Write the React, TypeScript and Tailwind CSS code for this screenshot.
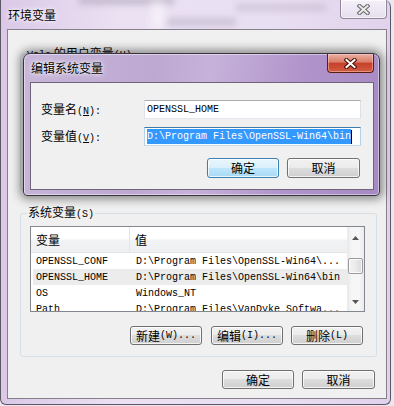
import React from 'react';

const cjk = "font-['Noto_Sans_CJK_SC',sans-serif] text-[12px]";
const mono = "font-['Liberation_Mono',monospace] text-[10px]";
const glow = '[text-shadow:0_0_6px_#fff,0_0_3px_#fff]';

interface EnvVar {
  name: string;
  value: string;
  selected?: boolean;
}

const systemVars: EnvVar[] = [
  { name: 'OPENSSL_CONF', value: 'D:\\Program Files\\OpenSSL-Win64\\...' },
  { name: 'OPENSSL_HOME', value: 'D:\\Program Files\\OpenSSL-Win64\\bin', selected: true },
  { name: 'OS', value: 'Windows_NT' },
  { name: 'Path', value: 'D:\\Program Files\\VanDyke Softwa...' },
];

const Latin: React.FC<{ children: React.ReactNode }> = ({ children }) => (
  <span className={mono}>{children}</span>
);

const CloseX: React.FC<{ outer: string; inner: string }> = ({ outer, inner }) => (
  <svg width="13" height="11" viewBox="0 0 13 11">
    <path d="M2.5 2 L10.5 9 M10.5 2 L2.5 9" stroke={outer} strokeWidth="4.2" strokeLinecap="square" />
    <path d="M2.5 2 L10.5 9 M10.5 2 L2.5 9" stroke={inner} strokeWidth="2" strokeLinecap="square" />
  </svg>
);

const Btn: React.FC<{ children: React.ReactNode; className: string; primary?: boolean }> = ({ children, className, primary }) => (
  <div
    className={`${className} flex items-center justify-center rounded-[3px] border leading-none text-black ${
      primary
        ? 'border-[#3c7fb1] bg-[linear-gradient(#eaf6fd_0%,#d9f0fc_49%,#bee6fd_50%,#a7d9f5_100%)]'
        : 'border-[#707070] bg-[linear-gradient(#f2f2f2_0%,#ebebeb_49%,#dddddd_50%,#cfcfcf_100%)]'
    } shadow-[inset_0_0_0_1px_rgba(255,255,255,0.75)]`}
  >
    {children}
  </div>
);

const Arrow: React.FC<{ down?: boolean }> = ({ down }) => (
  <svg width="7" height="4" viewBox="0 0 7 4">
    <path d={down ? 'M0 0 L7 0 L3.5 4 Z' : 'M0 4 L3.5 0 L7 4 Z'} fill="#565656" />
  </svg>
);

const VarList: React.FC = () => (
  <div className="mt-[4px] ml-[9px] w-[335px] h-[86px] border border-[#828790] bg-white flex overflow-hidden">
    <div className="flex-1 flex flex-col overflow-hidden">
      {/* header */}
      <div className="h-[26px] shrink-0 flex bg-[linear-gradient(#ffffff_0%,#ffffff_45%,#f1f2f4_55%,#eef0f2_100%)] border-b border-[#e5e5e5]">
        <div className={`w-[99px] pl-[5px] flex items-center border-r border-[#e3e5e8] ${cjk}`}>变量</div>
        <div className={`pl-[5px] flex items-center ${cjk}`}>值</div>
      </div>
      {systemVars.map((v) => (
        <div
          key={v.name}
          className={`ml-[2px] h-[16px] shrink-0 flex items-center whitespace-nowrap ${v.selected ? 'bg-[#ececec]' : ''}`}
        >
          <div className={`w-[98px] pl-[3px] ${mono}`}>{v.name}</div>
          <div className={`pl-[5px] ${mono}`}>{v.value}</div>
        </div>
      ))}
    </div>
    {/* scrollbar */}
    <div className="w-[17px] flex flex-col bg-[linear-gradient(90deg,#e9e9e9,#f6f6f6_30%,#f6f6f6_70%,#ebebeb)]">
      <div className="h-[22px] flex items-center justify-center">
        <Arrow />
      </div>
      <div className="flex-1">
        <div className="mt-[9px] mx-px h-[16px] rounded-[2px] border border-[#9a9a9a] bg-[linear-gradient(90deg,#f3f3f3,#eaeaea_50%,#d9d9d9)] shadow-[inset_0_0_0_1px_rgba(255,255,255,0.8)]" />
      </div>
      <div className="h-[18px] flex items-center justify-center">
        <Arrow down />
      </div>
    </div>
  </div>
);

const EditDialog: React.FC = () => (
  <div className="absolute left-[22px] top-[53px] w-[357px] h-[143px] rounded-t-[7px] rounded-b-[4px] border border-[#3a3440] bg-[linear-gradient(100deg,#c8b7d9_0%,#bda8d2_35%,#c6b2da_50%,#b093ca_75%,#a78ac4_100%)] shadow-[0_0_10px_3px_rgba(0,0,0,0.45),inset_0_0_0_1px_rgba(255,255,255,0.45)] flex flex-col">
    <div className="h-[28px] shrink-0 flex items-start justify-between">
      <span className={`pl-[7px] mt-[7px] leading-[14px] text-black ${cjk} ${glow}`}>编辑系统变量</span>
      <div className="mr-[5px] w-[47px] h-[19px] rounded-b-[4px] border border-t-0 border-[#5b1d13] bg-[linear-gradient(#eab0a4_0%,#da7c66_45%,#c6402a_52%,#d35c42_100%)] shadow-[inset_0_0_0_1px_rgba(255,220,210,0.45)] flex items-center justify-center">
        <CloseX outer="#4a1208" inner="#ffffff" />
      </div>
    </div>
    <div className="ml-[6px] w-[344px] h-[108px] border border-[#6f6478] bg-[#f0f0f0] flex flex-col">
      <div className="mt-[17px] pl-[10px] flex items-center">
        <div className={`w-[103px] ${cjk}`}>
          变量名<Latin>(<u>N</u>):</Latin>
        </div>
        <div className="h-[19px] w-[217px] border border-[#abadb3] border-l-[#e2e3ea] border-r-[#dbdfe6] border-b-[#e3e9ef] bg-white pl-[2px] flex items-center">
          <Latin>OPENSSL_HOME</Latin>
        </div>
      </div>
      <div className="mt-[8px] pl-[10px] flex items-center">
        <div className={`w-[103px] ${cjk}`}>
          变量值<Latin>(<u>V</u>):</Latin>
        </div>
        <div className="h-[19px] w-[217px] border border-[#3d7bad] border-l-[#b5cfe7] border-r-[#b5cfe7] border-b-[#c3dbef] bg-white pl-[2px] flex items-center">
          <span className={`${mono} leading-[15px] bg-[#3399ff] text-white`}>D:\Program Files\OpenSSL-Win64\bin</span>
          <span className="w-px h-[14px] bg-black" />
        </div>
      </div>
      <div className="mt-[12px] pr-[13px] flex justify-end gap-[8px]">
        <Btn className={`w-[72px] h-[20px] ${cjk}`} primary>
          确定
        </Btn>
        <Btn className={`w-[73px] h-[20px] ${cjk}`}>取消</Btn>
      </div>
    </div>
  </div>
);

export default function App() {
  return (
    <div className="w-[394px] h-[406px] overflow-hidden bg-[#ebe6ef]">
      <div className="relative w-[391px] h-[405px] border-x border-b border-[#5e5866] rounded-tr-[7px] rounded-b-[6px] bg-[linear-gradient(90deg,#dac8e7_0%,#ebe1f3_30%,#e9dff2_70%,#e0d2ec_100%)] flex flex-col">
        {/* title bar */}
        <div className="relative h-[29px] shrink-0 flex items-start justify-between overflow-hidden">
          <div className="absolute left-[78px] top-[-4px] w-[95px] h-[9px] bg-[#a69bb0]/50 blur-[3px]" />
          <div className="absolute left-[235px] top-[4px] w-[90px] h-[7px] bg-[#b0a6ba]/40 blur-[3px]" />
          <div className="absolute left-[165px] top-[18px] w-[70px] h-[8px] bg-[#a89db3]/40 blur-[3px]" />
          <div className="absolute left-[150px] top-0 w-[14px] h-[29px] bg-white/50 blur-[4px]" />
          <span className={`relative pl-[7px] mt-[8px] leading-[14px] text-black ${cjk} ${glow}`}>环境变量</span>
          <div className="relative mr-[3px] w-[47px] h-[19px] rounded-b-[4px] border border-t-0 border-[#8f8898] bg-[linear-gradient(#f5f0f9,#e6deee)] shadow-[inset_0_0_0_1px_rgba(255,255,255,0.6)] flex items-center justify-center">
            <CloseX outer="#6d6d6d" inner="#e9e9e9" />
          </div>
        </div>

        {/* client area */}
        <div className="ml-[6px] w-[380px] h-[370px] border border-[#858089] bg-[#f0f0f0] flex flex-col">
          <fieldset className="ml-[12px] mt-[16px] w-[357px] h-[144px] border border-[#d5dfe5] rounded-[3px]">
            <legend className={`ml-[5px] px-[1px] leading-[14px] ${cjk}`}>
              <Latin>Vole</Latin> 的用户变量<Latin>(U)</Latin>
            </legend>
          </fieldset>

          <fieldset className="ml-[12px] mt-[15px] w-[357px] pb-[11px] border border-[#d5dfe5] rounded-[3px]">
            <legend className={`ml-[6px] px-[1px] leading-[14px] ${cjk}`}>
              系统变量<Latin>(S)</Latin>
            </legend>
            <VarList />
            <div className="mt-[14px] mr-[13px] flex justify-end">
              <Btn className={`w-[72px] h-[19px] ${cjk}`}>
                新建<Latin>(W)...</Latin>
              </Btn>
              <Btn className={`ml-[9px] w-[72px] h-[19px] ${cjk}`}>
                编辑<Latin>(I)...</Latin>
              </Btn>
              <Btn className={`ml-[8px] w-[72px] h-[19px] ${cjk}`}>
                删除<Latin>(L)</Latin>
              </Btn>
            </div>
          </fieldset>

          <div className="mt-[13px] mr-[11px] flex justify-end gap-[8px]">
            <Btn className={`w-[72px] h-[19px] ${cjk}`}>确定</Btn>
            <Btn className={`w-[73px] h-[19px] ${cjk}`}>取消</Btn>
          </div>
        </div>

        <EditDialog />
      </div>
    </div>
  );
}
